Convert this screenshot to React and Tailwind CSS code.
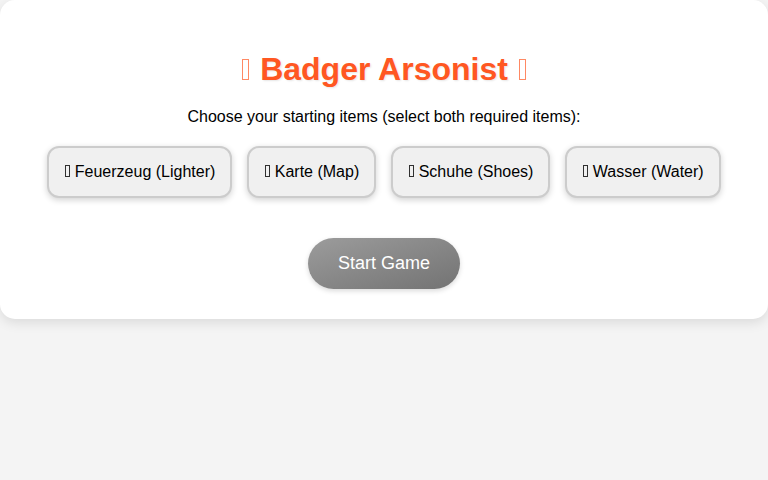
// The reference shows its emoji as missing-glyph boxes; draw those as small outlined boxes.
function Tofu({ big }) {
  return (
    <span
      className={
        big
          ? "inline-block align-baseline w-[7px] h-[21px] mx-[2px] border border-current opacity-70"
          : "inline-block align-baseline w-[5px] h-[12px] mx-[0.5px] border border-current opacity-80"
      }
    />
  );
}

const items = [
  "Feuerzeug (Lighter)",
  "Karte (Map)",
  "Schuhe (Shoes)",
  "Wasser (Water)",
];

export default function App() {
  return (
    <div className="min-h-screen w-full bg-[#f4f4f4] font-['Liberation_Sans',Arial,sans-serif]">
      <div className="bg-white rounded-[15px] shadow-[0_4px_12px_rgba(0,0,0,0.1)] px-[30px] pt-[51px] pb-[30px] text-center">
        <h1 className="text-[32px] leading-[37px] font-bold text-[#ff5722] [text-shadow:1px_1px_2px_rgba(0,0,0,0.1)]">
          <Tofu big /> Badger Arsonist <Tofu big />
        </h1>
        <p className="mt-[20px] text-base leading-[18px] text-black">
          Choose your starting items (select both required items):
        </p>
        <div className="mt-[20px] flex justify-center gap-[15px]">
          {items.map((label) => (
            <button
              key={label}
              className="whitespace-nowrap px-[15px] py-[15px] text-base leading-[18px] text-black bg-[#f0f0f0] border-2 border-[#ccc] rounded-[12px] shadow-[0_2px_6px_rgba(0,0,0,0.18)]"
            >
              <Tofu /> {label}
            </button>
          ))}
        </div>
        <div className="mt-[40px] flex justify-center">
          <button className="px-[30px] py-[15px] text-[18px] leading-[21px] text-white rounded-full bg-gradient-to-br from-[#9c9c9c] to-[#737373] shadow-[0_2px_5px_rgba(0,0,0,0.15)]">
            Start Game
          </button>
        </div>
      </div>
    </div>
  );
}
